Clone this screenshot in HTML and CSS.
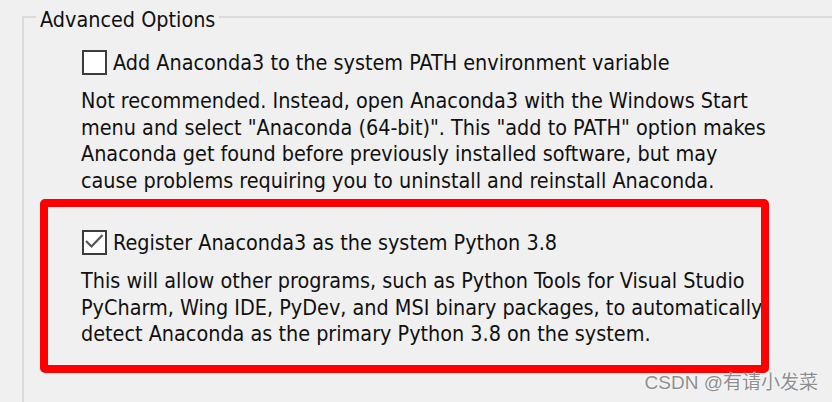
FILE: index.html
```html
<!DOCTYPE html>
<html>
<head>
<meta charset="utf-8">
<link rel="stylesheet" href="styles.css">
</head>
<body>
<fieldset class="group">
  <legend class="group-title">Advanced Options</legend>
  <div class="options">
    <div class="option">
      <label class="check-row">
        <svg class="box" width="25" height="25" viewBox="0 0 25 25"><rect x="1" y="1" width="23" height="23" fill="#fff" stroke="#3c3c3c" stroke-width="2"/></svg>
        <span class="check-label">Add Anaconda3 to the system PATH environment variable</span>
      </label>
      <p class="desc">Not recommended. Instead, open Anaconda3 with the Windows Start<br>menu and select "Anaconda (64-bit)". This "add to PATH" option makes<br>Anaconda get found before previously installed software, but may<br>cause problems requiring you to uninstall and reinstall Anaconda.</p>
    </div>
    <div class="option second">
      <label class="check-row">
        <svg class="box" width="25" height="25" viewBox="0 0 25 25"><rect x="1" y="1" width="23" height="23" fill="#fff" stroke="#3c3c3c" stroke-width="2"/><polyline points="4,11 9.5,16.5 20.5,5" fill="none" stroke="#555" stroke-width="2.2"/></svg>
        <span class="check-label">Register Anaconda3 as the system Python 3.8</span>
      </label>
      <p class="desc">This will allow other programs, such as Python Tools for Visual Studio<br>PyCharm, Wing IDE, PyDev, and MSI binary packages, to automatically<br>detect Anaconda as the primary Python 3.8 on the system.</p>
    </div>
  </div>
</fieldset>
<div class="highlight"></div>
<div class="watermark">CSDN @有请小发菜</div>
</body>
</html>
```

FILE: styles.css
```css
html, body {
  margin: 0;
  padding: 0;
  width: 832px;
  height: 402px;
  overflow: hidden;
  background: #f0f0f0;
}
body {
  position: relative;
  padding-top: 2px;
  box-sizing: border-box;
  font-family: "DejaVu Sans Condensed", "DejaVu Sans", sans-serif;
  color: #101010;
}
.group {
  margin: 0 0 0 22px;
  padding: 0;
  border: none;
  border-top: 2px solid #dadada;
  border-left: 2px solid #dadada;
  height: 400px;
  box-sizing: border-box;
}
.group-title {
  margin-left: 12px;
  padding: 6px 4px 0 4px;
  font-size: 21.4px;
  line-height: 24px;
}
.options {
  padding: 18px 0 0 57px;
  display: flex;
  flex-direction: column;
  gap: 36px;
}
.check-row {
  display: flex;
  align-items: center;
  gap: 6px;
  margin-left: 1px;
  font-size: 21.4px;
  line-height: 25px;
}
.box {
  display: block;
  flex: none;
}
.desc {
  margin: 13px 0 0 0;
  font-size: 21.4px;
  line-height: 26.5px;
  white-space: nowrap;
}
.highlight {
  position: absolute;
  left: 40px;
  top: 199px;
  width: 729px;
  height: 174px;
  box-sizing: border-box;
  border: 8px solid #ff0000;
  border-radius: 5px;
}
.watermark {
  position: absolute;
  right: 14px;
  bottom: 8px;
  font-family: "Liberation Sans", "Noto Sans CJK SC", sans-serif;
  font-size: 19px;
  color: #8e8e8e;
  text-shadow: 0 0 2px #fff, 0 0 1px #fff;
}
```
